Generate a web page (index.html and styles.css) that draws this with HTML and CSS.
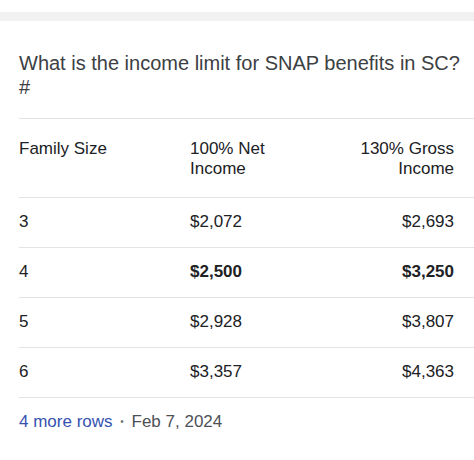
FILE: index.html
```html
<!DOCTYPE html>
<html lang="en">
<head>
    <meta charset="UTF-8">
    <meta name="viewport" content="width=device-width, initial-scale=1.0">
    <title>SNAP income limit in SC</title>
    <link rel="stylesheet" href="styles.css">
</head>
<body>
    <!-- Divider band above the card -->
    <div class="band"></div>

    <div class="snippet">
        <h2 class="question">What is the income limit for SNAP benefits in SC?<br>#</h2>

        <table class="limits">
            <thead>
                <tr>
                    <th>Family Size</th>
                    <th>100% Net<br>Income</th>
                    <th class="num">130% Gross<br>Income</th>
                </tr>
            </thead>
            <tbody>
                <tr>
                    <td>3</td>
                    <td>$2,072</td>
                    <td class="num">$2,693</td>
                </tr>
                <tr>
                    <td>4</td>
                    <td class="strong">$2,500</td>
                    <td class="num strong">$3,250</td>
                </tr>
                <tr>
                    <td>5</td>
                    <td>$2,928</td>
                    <td class="num">$3,807</td>
                </tr>
                <tr>
                    <td>6</td>
                    <td>$3,357</td>
                    <td class="num">$4,363</td>
                </tr>
            </tbody>
        </table>

        <div class="footer">
            <a class="more" href="#">4 more rows</a>
            <span class="dot">•</span>
            <span class="date">Feb 7, 2024</span>
        </div>
    </div>
</body>
</html>
```

FILE: styles.css
```css
/* Page base */
body {
    margin: 0;
    background: #fff;
    font-family: "Liberation Sans", Arial, sans-serif;
    color: #202124;
}

/* Grey band at the top */
.band {
    margin-top: 12px;
    height: 9px;
    background-color: #f1f1f1;
}

/* Featured snippet card */
.snippet {
    padding-left: 19px;
}

.question {
    margin: 30px 0 0;
    padding-bottom: 19px;
    font-size: 20px;
    font-weight: normal;
    line-height: 24px;
    color: #3c4043;
    border-bottom: 1px solid #e3e3e3;
}

/* Table */
.limits {
    width: 100%;
    border-collapse: collapse;
    font-size: 17px;
    line-height: 20px;
}

.limits th,
.limits td {
    text-align: left;
    vertical-align: top;
    border-bottom: 1px solid #e3e3e3;
    padding: 14px 0 15px;
}

.limits th {
    font-weight: normal;
    padding: 20px 0 18px;
}

.limits th:first-child,
.limits td:first-child {
    width: 171px;
}

.limits .num {
    text-align: right;
    padding-right: 20px;
}

.limits .strong {
    font-weight: bold;
}

/* Footer line */
.footer {
    padding-top: 14px;
    font-size: 17px;
    line-height: 20px;
    color: #4d5156;
}

.more {
    color: #3552b0;
    text-decoration: none;
}

.dot {
    font-size: 10px;
    margin: 0 3px;
    vertical-align: 2px;
    color: #70757a;
}
```
